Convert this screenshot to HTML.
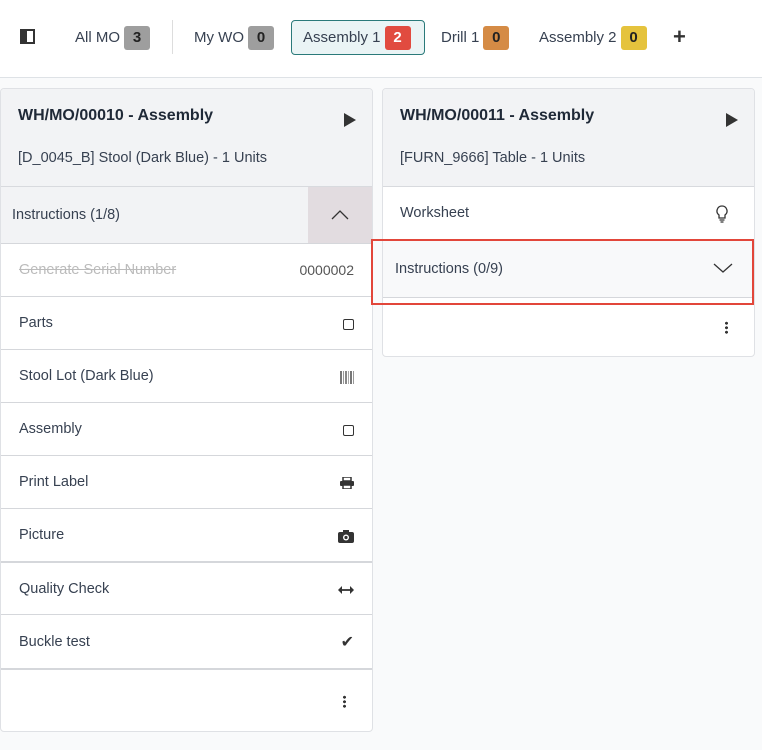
<!DOCTYPE html>
<html><head><style>
*{box-sizing:border-box;margin:0;padding:0}
body{width:762px;height:750px;background:#f9fafb;font-family:"Liberation Sans",sans-serif;color:#1f2937;position:relative;overflow:hidden}
.top{position:absolute;left:0;top:0;width:762px;height:78px;background:#fff;border-bottom:1px solid #dee2e6}
.t{position:absolute;top:26px;height:24px;font-size:15px;line-height:24px;color:#374151;white-space:nowrap}
.b{display:inline-block;width:26px;height:24px;border-radius:3px;text-align:center;font-weight:bold;color:#222;margin-left:4px;vertical-align:top}
.card{position:absolute;background:#fff;border:1px solid #dfe1e5;border-radius:4px;overflow:hidden}
.hd{position:absolute;left:0;top:0;right:0;height:98px;background:#f2f3f5;border-bottom:1px solid #d8dade}
.h1{position:absolute;left:17px;top:18px;font-size:16px;font-weight:bold;color:#1f2937}
.h2{position:absolute;left:17px;top:61px;font-size:14.5px;color:#374151}
.play{position:absolute;right:16px;top:24px;width:0;height:0;border-left:12px solid #333;border-top:7px solid transparent;border-bottom:7px solid transparent}
.row{position:absolute;left:0;right:0;height:53px;border-bottom:1px solid #d5d7db;font-size:14.5px;line-height:53px;padding-left:18px;color:#374151}
.ic{position:absolute;right:18px;top:0;line-height:53px;font-size:14px;color:#333}
</style></head><body>
<div class="top">
 <div style="position:absolute;left:20px;top:29px;width:15px;height:15px;border:2px solid #333;"><div style="width:5px;height:11px;background:#333"></div></div>
 <div class="t" style="left:75px">All MO<span class="b" style="background:#9e9e9e">3</span></div>
 <div style="position:absolute;left:172px;top:20px;width:1px;height:34px;background:#ddd"></div>
 <div class="t" style="left:194px">My WO<span class="b" style="background:#9e9e9e">0</span></div>
 <div style="position:absolute;left:291px;top:20px;width:134px;height:35px;border:1px solid #2a7a7a;border-radius:4px;background:#eaf4f5"></div>
 <div class="t" style="left:303px">Assembly 1<span class="b" style="background:#e14b3f;color:#fff">2</span></div>
 <div class="t" style="left:441px">Drill 1<span class="b" style="background:#d58b45">0</span></div>
 <div class="t" style="left:539px">Assembly 2<span class="b" style="background:#e5c33d">0</span></div>
 <div class="t" style="left:673px;top:25px;font-size:22px;font-weight:bold;color:#333">+</div>
</div>

<div class="card" style="left:0;top:88px;width:373px;height:644px">
 <div class="hd"><div class="h1">WH/MO/00010 - Assembly</div><div class="h2">[D_0045_B] Stool (Dark Blue) - 1 Units</div><div class="play"></div></div>
 <div class="row" style="top:98px;height:57px;line-height:57px;padding-left:11px;background:#f2f3f5">Instructions (1/8)
  <div style="position:absolute;right:0;top:0;width:64px;height:56px;background:#e2dce0"><svg width="64" height="56"><path d="M24 32 L32 24 L40 32" fill="none" stroke="#333" stroke-width="1.3"/></svg></div></div>
 <div class="row" style="top:155px;color:#bbb;text-decoration:line-through">Generate Serial Number<span class="ic" style="color:#555;text-decoration:none">0000002</span></div>
 <div class="row" style="top:208px">Parts<span class="ic"><span style="display:inline-block;width:11px;height:11px;border:1.5px solid #333;border-radius:2px;vertical-align:middle"></span></span></div>
 <div class="row" style="top:261px">Stool Lot (Dark Blue)<span class="ic"><svg width="14" height="13" style="vertical-align:middle"><rect x="0" y="0" width="2" height="13" fill="#777"/><rect x="3" y="0" width="1" height="13" fill="#999"/><rect x="5" y="0" width="2" height="13" fill="#888"/><rect x="8" y="0" width="1" height="13" fill="#aaa"/><rect x="10" y="0" width="2" height="13" fill="#777"/><rect x="13" y="0" width="1" height="13" fill="#999"/></svg></span></div>
 <div class="row" style="top:314px">Assembly<span class="ic"><span style="display:inline-block;width:11px;height:11px;border:1.5px solid #333;border-radius:2px;vertical-align:middle"></span></span></div>
 <div class="row" style="top:367px">Print Label<span class="ic"><svg width="14" height="12" style="vertical-align:middle"><rect x="3" y="0" width="8" height="4" fill="none" stroke="#333" stroke-width="1.5"/><rect x="0" y="4" width="14" height="5" rx="1" fill="#333"/><rect x="3" y="8" width="8" height="4" fill="#fff" stroke="#333" stroke-width="1.5"/></svg></span></div>
 <div class="row" style="top:420px">Picture<span class="ic"><svg width="16" height="13" style="vertical-align:middle"><rect x="0" y="2" width="16" height="11" rx="2" fill="#333"/><rect x="5" y="0" width="6" height="3" fill="#333"/><circle cx="8" cy="7.5" r="3" fill="#fff"/><circle cx="8" cy="7.5" r="1.6" fill="#333"/></svg></span></div>
 <div class="row" style="top:473px;border-top:1px solid #d5d7db">Quality Check<span class="ic"><svg width="16" height="8" style="vertical-align:middle"><path d="M2 4H14" stroke="#333" stroke-width="1.8"/><path d="M0 4L4 0V8Z M16 4L12 0V8Z" fill="#333"/></svg></span></div>
 <div class="row" style="top:527px">Buckle test<span class="ic" style="font-size:16px">✔</span></div>
 <div style="position:absolute;right:26px;top:606px;width:3px;height:13px;background:radial-gradient(circle,#333 1.4px,transparent 1.6px) 0 0/3px 4.5px"></div>
 <div style="position:absolute;left:0;right:0;top:580px;height:1px;background:#d5d7db"></div>
</div>

<div class="card" style="left:382px;top:88px;width:373px;height:269px">
 <div class="hd"><div class="h1">WH/MO/00011 - Assembly</div><div class="h2">[FURN_9666] Table - 1 Units</div><div class="play"></div></div>
 <div class="row" style="top:98px;padding-left:17px">Worksheet<span class="ic" style="right:26px"><svg width="12" height="18" style="vertical-align:middle"><path d="M6 1A5 5 0 0 0 3 10V13H9V10A5 5 0 0 0 6 1Z" fill="none" stroke="#333" stroke-width="1.3"/><path d="M3.5 15H8.5M4.5 17H7.5" stroke="#333" stroke-width="1.3"/></svg></span></div>
 <div class="row" style="top:152px;height:57px;line-height:57px;padding-left:12px;background:#f8f9fa">Instructions (0/9)<svg style="position:absolute;right:20px;top:20px" width="22" height="14"><path d="M2 3L11 11L20 3" fill="none" stroke="#333" stroke-width="1.3"/></svg></div>
 <div style="position:absolute;right:26px;top:232px;width:3px;height:13px;background:radial-gradient(circle,#333 1.4px,transparent 1.6px) 0 0/3px 4.5px"></div>
</div>
<div style="position:absolute;left:371px;top:239px;width:383px;height:66px;border:2px solid #e2463a"></div>
</body></html>
